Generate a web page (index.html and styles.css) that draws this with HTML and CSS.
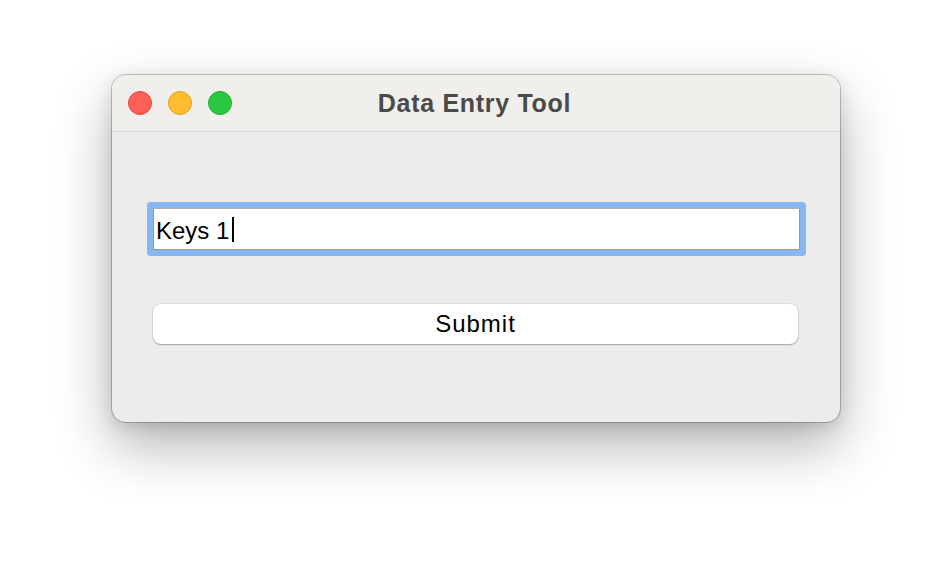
FILE: index.html
```html
<!DOCTYPE html>
<html>
<head>
<meta charset="utf-8">
<link rel="stylesheet" href="styles.css">
</head>
<body>
<div class="window">
  <div class="titlebar">
    <div class="lights">
      <span class="light red"></span>
      <span class="light yellow"></span>
      <span class="light green"></span>
    </div>
    <div class="title">Data Entry Tool</div>
  </div>
  <div class="content">
    <div class="field"><span class="value">Keys 1</span><span class="caret"></span></div>
    <div class="button">Submit</div>
  </div>
</div>
</body>
</html>
```
FILE: styles.css
```css
html, body {
  margin: 0;
  padding: 0;
  background: #ffffff;
}
body {
  width: 952px;
  height: 570px;
  overflow: hidden;
  padding: 75px 0 0 112px;
  box-sizing: border-box;
  font-family: "Liberation Sans", Arial, sans-serif;
}
.window {
  width: 728px;
  height: 347px;
  border-radius: 14px;
  background: #ececec;
  box-shadow: 0 0 0 1px rgba(0,0,0,0.22), 0 24px 56px rgba(0,0,0,0.30), 0 4px 16px rgba(0,0,0,0.12);
  overflow: hidden;
  display: flex;
  flex-direction: column;
}
.titlebar {
  height: 56px;
  flex: none;
  background: #f0efeb;
  border-bottom: 1px solid #d2d2d0;
  position: relative;
  display: flex;
  align-items: center;
}
.lights {
  display: flex;
  gap: 16px;
  padding-left: 16px;
  position: relative;
  z-index: 1;
}
.light {
  width: 24px;
  height: 24px;
  border-radius: 50%;
  box-sizing: border-box;
}
.red { background: #fe5f57; border: 1px solid #e0443e; }
.yellow { background: #febc2e; border: 1px solid #dea123; }
.green { background: #28c840; border: 1px solid #1aab29; }
.title {
  position: absolute;
  left: 0;
  right: 0;
  top: 0;
  bottom: 0;
  display: flex;
  align-items: center;
  justify-content: center;
  font-weight: bold;
  font-size: 25px;
  letter-spacing: 0.7px;
  color: #4a4a4a;
  padding-right: 3px;
  padding-top: 1px;
}
.content {
  padding: 76px 40px 0 41px;
  display: flex;
  flex-direction: column;
}
.field {
  height: 42px;
  box-sizing: border-box;
  background: #fff;
  border: 1px solid #9a9a9a;
  border-top-color: #b0b0b0;
  box-shadow: 0 0 0 6px #86b7f1;
  border-radius: 1px;
  display: flex;
  align-items: center;
  padding-left: 2px;
  padding-top: 3px;
  font-size: 24px;
  color: #000;
}
.caret {
  width: 2px;
  height: 25px;
  background: #000;
  margin-left: 3px;
  margin-top: -2px;
}
.button {
  margin-top: 54px;
  margin-right: 2px;
  height: 40px;
  box-sizing: border-box;
  background: #fff;
  border-radius: 8px;
  box-shadow: 0 0 0 0.5px rgba(0,0,0,0.12), 0 1px 1.5px rgba(0,0,0,0.28);
  display: flex;
  align-items: center;
  justify-content: center;
  font-size: 24px;
  letter-spacing: 1px;
  color: #000;
}
```
